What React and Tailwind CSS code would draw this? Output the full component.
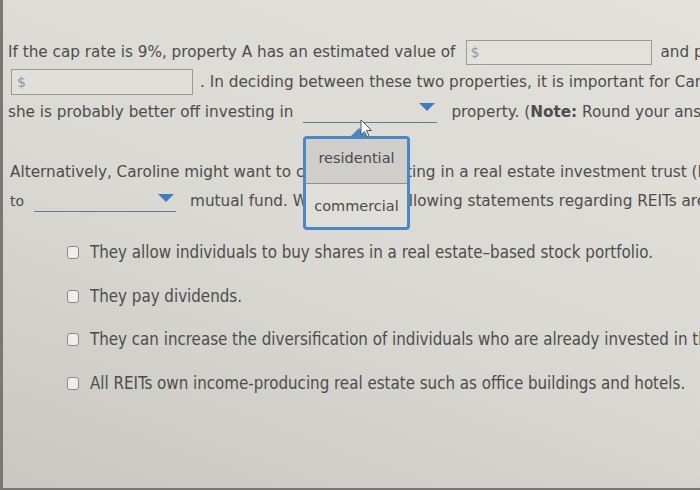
import React from "react";

function Tri({ className }) {
  return (
    <svg width="16" height="9" viewBox="0 0 16 9" className={className}>
      <polygon points="0,0 16,0 8,8" fill="#3f7dbf" />
    </svg>
  );
}

function Check({ children }) {
  return (
    <div className="flex items-center h-[43.5px]">
      <div className="shrink-0 w-[12px] h-[13px] ml-[64px] mr-[11px] rounded-[3px] border-[1.5px] border-[#8a8a8a] bg-[#efeeeb]" />
      <span>{children}</span>
    </div>
  );
}

export default function App() {
  return (
    <div
      className="relative w-[700px] h-[490px] overflow-hidden bg-[linear-gradient(200deg,#e3e1dc_0%,#dad8d2_55%,#c9c7c1_100%)] text-[#4d4d4d] whitespace-nowrap border-l-[3px] border-b-[2px] border-[#7a7874]"
      style={{ fontFamily: '"DejaVu Sans", Verdana, sans-serif' }}
    >
      <div className="pt-[37px] text-[15.25px]">
        <div className="flex items-center h-[30px] pl-[5px]">
          <span>If the cap rate is 9%, property A has an estimated value of</span>
          <div className="shrink-0 ml-[10px] w-[186px] h-[25px] border border-[#9a9994] bg-[#e3e1dc] flex items-center pl-[4px] text-[#8b9aa6] text-[14px]">$</div>
          <span className="ml-[9px]">and property B has an estimated value of</span>
        </div>
        <div className="flex items-center h-[30px] pl-[8px]">
          <div className="shrink-0 w-[182px] h-[26px] border border-[#9a9994] bg-[#e1dfda] flex items-center pl-[5px] text-[#8b9aa6] text-[14px]">$</div>
          <span className="ml-[7px]">. In deciding between these two properties, it is important for Caroline to</span>
        </div>
        <div className="flex items-center h-[30px] pl-[5px]">
          <span>she is probably better off investing in</span>
          <div className="shrink-0 ml-[10px] w-[134px] h-[22px] border-b-[1.5px] border-[#5e7b98] flex items-start justify-end pr-[2px] pt-[2px]">
            <Tri />
          </div>
          <span className="ml-[14px]">property. (<b className="font-bold">Note:</b> Round your answers</span>
        </div>
        <div className="h-[30px]" />
        <div className="flex items-center h-[30px] pl-[7px]">
          <span>Alternatively, Caroline might want to consider investing in a real estate investment trust (REIT)</span>
        </div>
        <div className="flex items-center h-[29px] pl-[7px]">
          <span className="text-[14px]">to</span>
          <div className="shrink-0 ml-[10px] w-[142px] h-[20px] border-b-[1.5px] border-[#5e7b98] flex items-start justify-end pr-[2px] pt-[2px]">
            <Tri />
          </div>
          <span className="ml-[14px]">mutual fund. Which of the following statements regarding REITs are true?</span>
        </div>
        <div
          className="mt-[15px] text-[16.8px]"
          style={{ fontFamily: '"DejaVu Sans Condensed", "DejaVu Sans", sans-serif', fontStretch: "condensed" }}
        >
          <Check>They allow individuals to buy shares in a real estate–based stock portfolio.</Check>
          <Check>They pay dividends.</Check>
          <Check>They can increase the diversification of individuals who are already invested in the stock market.</Check>
          <Check>All REITs own income-producing real estate such as office buildings and hotels.</Check>
        </div>
      </div>

      {/* dropdown menu overlay */}
      <div className="absolute left-[300px] top-[128px]">
        <div className="ml-[48px] w-0 h-0 border-l-[8px] border-r-[8px] border-b-[8px] border-l-transparent border-r-transparent border-b-[#4a87c6]" />
        <div className="w-[107px] h-[94px] border-[3px] border-[#4a87c6] rounded-[4px] overflow-hidden flex flex-col bg-[#dfded9]">
          <div className="h-[45px] bg-[#cfcecb] border-b border-[#8e8e8c] flex items-center justify-center text-[14.5px] text-[#4b4b4b] pb-[4px]">residential</div>
          <div className="flex-1 flex items-center justify-center text-[14.5px] text-[#4b4b4b] pt-[2px]">commercial</div>
        </div>
      </div>

      {/* mouse cursor */}
      <svg className="absolute left-[357px] top-[119px]" width="14" height="20" viewBox="0 0 14 20">
        <path d="M1 1 L1 16 L4.5 12.5 L7 18 L9 17 L6.5 11.5 L11.5 11.5 Z" fill="#ffffff" stroke="#555" strokeWidth="1" />
      </svg>
    </div>
  );
}
